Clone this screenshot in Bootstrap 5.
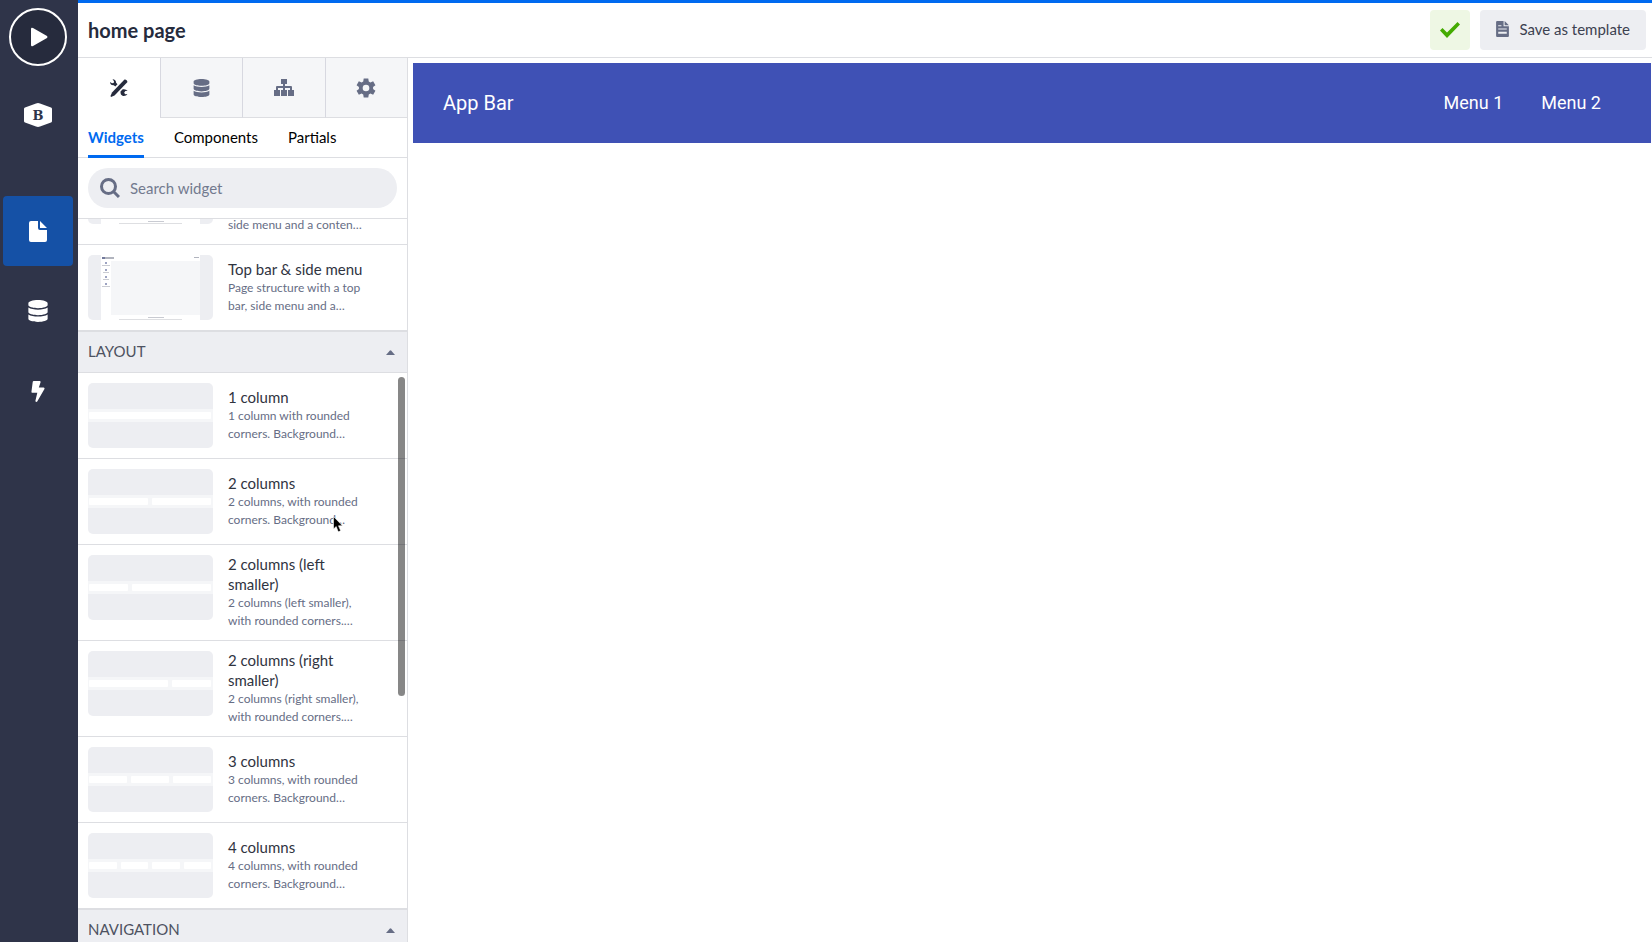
<!DOCTYPE html>
<html lang="en">
<head>
<meta charset="utf-8">
<meta name="viewport" content="width=device-width, initial-scale=1">
<title>home page</title>
<link href="https://cdn.jsdelivr.net/npm/bootstrap@5.3.0/dist/css/bootstrap.min.css" rel="stylesheet">
<style>
  :root { --ink:#262b3d; --slate:#666d85; --line:#dddee2; --soft:#edeef2; --blue:#006af0; }
  body { font-family: Lato, sans-serif; font-size:15px; line-height:20px; color:var(--ink); background:#fff; }
  svg { display:block; fill:currentColor; }
  button { font:inherit; }
  .rail { width:78px; background:#2f3449; color:#fff; padding:8px 2px 0 0; }
  .rail button, .rail a { width:70px; height:70px; border:0; background:none; color:#fff; border-radius:4px; }
  .rail .play { width:58px; height:58px; border:2px solid #fff; border-radius:50%; background:var(--ink); }
  .play svg { margin-left:2px; }
  .rail .active { background:#1551a6; }
  .rail-links { margin-top:14px; }
  .rail-group { margin-top:46px; gap:10px; }
  .topbar { height:58px; border-top:3px solid var(--blue); border-bottom:1px solid var(--line); padding:0 6px 0 10px; }
  .topbar h1 { font-size:20px; line-height:24px; font-weight:700; }
  .saved { width:40px; height:40px; margin-right:10px; background:#eef7e4; color:#44ab00; border:0; border-radius:4px; }
  .save { height:40px; padding:0 16px 2px; gap:10px; background:var(--soft); border:0; border-radius:4px; color:#3c4150; }
  .save svg { color:var(--slate); }
  .side { width:330px; border-right:1px solid var(--line); }
  .modes button { flex:1 1 0; height:60px; border:0; border-left:1px solid #d7d8e0; border-bottom:1px solid var(--line); background:#f5f6f8; color:var(--slate); }
  .modes .active { background:#fff; color:var(--ink); border-color:transparent; border-left:0; }
  .kinds { height:40px; padding:0 10px; gap:30px; border-bottom:1px solid var(--line); }
  .kinds a { color:#000; text-decoration:none; padding-top:9px; height:40px; border-bottom:3px solid transparent; }
  .kinds .active { color:var(--blue); font-weight:700; border-color:var(--blue); }
  .search-area { padding:10px; border-bottom:1px solid var(--line); }
  .search-pill { height:40px; border-radius:20px; background:var(--soft); padding:0 12px; gap:10px; color:var(--slate); }
  .search-pill input { border:0; background:none; outline:0; padding:0; color:inherit; min-width:0; }
  .search-pill input::placeholder { color:#737a8f; opacity:1; }
  .widget { padding:9px 36px 10px 10px; gap:15px; border-bottom:1px solid var(--line); min-height:86px; }
  .widget h3 { font-size:15px; line-height:20px; font-weight:400; color:#30343f; margin:0; }
  .widget p { font-size:12px; line-height:18px; color:var(--slate); margin:0; }
  .widget-cut { height:26px; min-height:0; padding-top:0; padding-bottom:12px; }
  .widget-cut .thumb { margin-bottom:8px; }
  .widget-cut p { line-height:14px; }
  .thumb { width:125px; height:65px; margin-top:1px; border-radius:5px; background:var(--soft); overflow:hidden; flex:none; }
  .band { height:13px; margin-top:26px; padding:3px 2px 3px 1px; gap:4px; background:#f5f6f8; }
  .band i { flex:1 1 0; background:#fff; border-radius:1px; }
  .band .wide { flex-grow:2; }
  .section-head { height:42px; padding:0 12px 2px 10px; border:0; border-top:1px solid var(--line); border-bottom:1px solid var(--line); background:var(--soft); color:#4d5261; text-align:left; }
  .section-head svg { color:var(--slate); margin-top:2px; }
  .scroll-thumb { right:2px; top:158px; width:7px; height:319px; border-radius:4px; background:rgba(0,0,0,.47); }
  .pointer { left:255px; top:297px; color:#000; }
  .stage { padding:5px 1px 0 5px; }
  .appbar { height:80px; background:#3f51b5; color:#fff; font-family:Roboto,sans-serif; padding:0 50px 0 30px; font-size:18px; }
  .appbar a { color:#fff; text-decoration:none; }
  .appbar .brand { font-size:20px; }
  .menus { gap:38px; }
</style>
</head>
<body>
<svg width="0" height="0" class="position-absolute" aria-hidden="true">
  <symbol id="db" viewBox="0 0 448 512"><path d="M448 73v46c0 40-100 73-224 73S0 159 0 119V73C0 33 100 0 224 0s224 33 224 73zm0 103v103c0 40-100 73-224 73S0 319 0 279V176c48 33 136 49 224 49s176-16 224-49zm0 160v103c0 40-100 73-224 73S0 479 0 439V336c48 33 136 49 224 49s176-16 224-49z"/></symbol>
  <symbol id="page-frame" viewBox="0 0 125 65">
    <path fill="#fff" d="M13 0h99v65H13z"/><path fill="#f5f6f8" d="M23 6h89v54H23z"/>
    <path fill="#737a9c" d="M14 2h3v2h-3z"/><path fill="#b1b4be" d="M17 2h9v2h-9zM106 2h5v1h-5z"/>
    <path fill="#c9cbd2" d="M14 10h8v1h-8zM15 17h6v1h-6zM15 24h6v1h-6zM14 31h8v1h-8zM60 62h16v1H60z"/>
    <path fill="#9da3c2" d="M17 7h2v2h-2zM17 14h2v2h-2zM17 21h2v2h-2zM17 28h2v2h-2z"/><path fill="#dedfe2" d="M31 64h63v1H31z"/>
  </symbol>
</svg>
<div class="d-flex vh-100 overflow-hidden">
  <nav class="rail d-flex flex-column align-items-center flex-shrink-0" aria-label="Main">
    <button class="play d-flex align-items-center justify-content-center p-0" aria-label="Play"><svg width="18" height="20" viewBox="0 0 18 20"><path d="M1 2v16q0 2 2 1l14-8q1-1 0-2L3 1Q1 0 1 2z"/></svg></button>
    <div class="rail-links">
      <a href="#" class="d-flex align-items-center justify-content-center text-decoration-none" aria-label="Brand"><svg width="28" height="24" viewBox="0 0 28 24"><path d="M14 0q1 0 2 .5l11 4q1 .4 1 1.500v12q0 1.100-1 1.500l-11 4q-2 .8-4 0l-11-4q-1-.4-1-1.500V6q0-1.100 1-1.500l11-4Q13 0 14 0z"/><text x="14" y="17" text-anchor="middle" font-family="DejaVu Serif, serif" font-weight="700" font-size="13" fill="#2f3449">B</text></svg></a>
    </div>
    <div class="rail-group d-flex flex-column">
      <a href="#" class="active d-flex align-items-center justify-content-center" aria-label="Pages"><svg width="18" height="21" viewBox="0 0 18 21"><path d="M2 0h7v7q0 2 2 2h7v10q0 2-2 2H2q-2 0-2-2V2q0-2 2-2zM11 0l7 7h-7z"/></svg></a>
      <a href="#" class="d-flex align-items-center justify-content-center" aria-label="Data"><svg width="20" height="22"><use href="#db"/></svg></a>
      <a href="#" class="d-flex align-items-center justify-content-center" aria-label="Actions"><svg width="14" height="21" viewBox="0 0 320 512"><path d="M296 160H180l43-129C227 15 216 0 200 0H56C44 0 34 9 32 21L0 261c-2 14 9 27 24 27h119L97 483c-4 15 8 29 23 29 8 0 16-4 21-12l176-304c9-16-3-36-21-36z"/></svg></a>
    </div>
  </nav>
  <div class="d-flex flex-column flex-grow-1 overflow-hidden">
    <header class="topbar d-flex align-items-center flex-shrink-0">
      <h1 class="m-0 flex-grow-1">home page</h1>
      <button class="saved d-flex align-items-center justify-content-center p-0" aria-label="Saved"><svg width="20" height="16" viewBox="0 0 20 16"><path d="M0 8.500 2.500 6 7 10.500 17.500 0 20 2.500 7 16z"/></svg></button>
      <button class="save d-flex align-items-center"><svg width="13" height="16" viewBox="0 0 12 15"><path fill-rule="evenodd" d="M1 0h6v5h5v9q0 1-1 1H1q-1 0-1-1V1q0-1 1-1zM8 0l4 4H8zM2 4v1h3V4zM2 7v1h8V7zM2 10v2h8v-2z"/></svg>Save as template</button>
    </header>
    <div class="d-flex flex-grow-1 overflow-hidden">
      <aside class="side d-flex flex-column flex-shrink-0 overflow-hidden">
        <div class="modes d-flex flex-shrink-0">
          <button class="active d-flex align-items-center justify-content-center" aria-label="Build"><svg width="18" height="18" viewBox="0 0 18 18"><path d="M14.500.5q2.500-.5 3 2.500L4.500 16.500 1 18l-.500-1 1.500-3.500z"/><path d="M2.500.2q3.500 0 3.600 3.600L7.500 5.300 5.300 7.500 3.800 6.200Q.4 6.500 0 3l2 1.300 1.700-.3.300-1.700zM10.500 12.500l2.200-2.200q3-.5 5 1.500l-2.300.2-1.200 1.500.8 1.700 2.500-.2q-1.500 2.500-4.500 2-2.800-1-2.500-4.500z"/></svg></button>
          <button class="d-flex align-items-center justify-content-center" aria-label="Data"><svg width="17" height="18"><use href="#db"/></svg></button>
          <button class="d-flex align-items-center justify-content-center" aria-label="Structure"><svg width="20" height="17" viewBox="0 0 20 17"><path d="M7 0h6v5h-2v2h6q1 0 1 1v3h2v6h-6v-6h2V9h-5v2h2v6H7v-6h2V9H4v2h2v6H0v-6h2V8q0-1 1-1h6V5H7z"/></svg></button>
          <button class="d-flex align-items-center justify-content-center" aria-label="Settings"><svg width="20" height="20" viewBox="1.500 1.500 21 21"><path d="M19.400 13a7.500 7.500 0 0 0 0-2l2.500-1.900-2.400-4.200-2.900 1.200a7 7 0 0 0-1.700-1L14.400 2H9.600l-.5 3.100a7 7 0 0 0-1.700 1L4.500 4.900 2.100 9.100 4.600 11a7.500 7.500 0 0 0 0 2l-2.500 1.900 2.400 4.200 2.900-1.200a7 7 0 0 0 1.700 1l.5 3.100h4.800l.5-3.100a7 7 0 0 0 1.700-1l2.900 1.200 2.400-4.200zM12 15.500a3.500 3.500 0 1 1 0-7 3.500 3.500 0 0 1 0 7z"/></svg></button>
        </div>
        <nav class="kinds d-flex flex-shrink-0" aria-label="Library"><a href="#" class="active">Widgets</a><a href="#">Components</a><a href="#">Partials</a></nav>
        <div class="search-area flex-shrink-0">
          <label class="search-pill d-flex align-items-center"><svg width="20" height="20" viewBox="0 0 20 20" aria-hidden="true"><path fill="none" stroke="currentColor" stroke-width="3" d="M15.500 8.500a7 7 0 1 1-14 0 7 7 0 0 1 14 0zM13.500 13.500l5.500 5.500"/></svg><input class="flex-grow-1" type="text" placeholder="Search widget" aria-label="Search widget"></label>
        </div>
        <div class="position-relative flex-grow-1 overflow-hidden">
          <div class="widget widget-cut d-flex align-items-end"><div class="thumb"><svg width="125" height="65"><use href="#page-frame"/></svg></div><p>side menu and a conten…</p></div>
          <div class="widget d-flex"><div class="thumb"><svg width="125" height="65"><use href="#page-frame"/></svg></div><div class="align-self-center"><h3>Top bar &amp; side menu</h3><p>Page structure with a top bar, side menu and a…</p></div></div>
          <button class="section-head d-flex align-items-center justify-content-between w-100"><span>LAYOUT</span><svg width="9" height="5" viewBox="0 0 11 6"><path d="M0 6 4.500.8q1-1 2 0L11 6z"/></svg></button>
          <div class="widget d-flex"><div class="thumb"><div class="band d-flex"><i></i></div></div><div class="align-self-center"><h3>1 column</h3><p>1 column with rounded corners. Background…</p></div></div>
          <div class="widget d-flex"><div class="thumb"><div class="band d-flex"><i></i><i></i></div></div><div class="align-self-center"><h3>2 columns</h3><p>2 columns, with rounded corners. Background…</p></div></div>
          <div class="widget d-flex"><div class="thumb"><div class="band d-flex"><i></i><i class="wide"></i></div></div><div class="align-self-center"><h3>2 columns (left smaller)</h3><p>2 columns (left smaller), with rounded corners.…</p></div></div>
          <div class="widget d-flex"><div class="thumb"><div class="band d-flex"><i class="wide"></i><i></i></div></div><div class="align-self-center"><h3>2 columns (right smaller)</h3><p>2 columns (right smaller), with rounded corners.…</p></div></div>
          <div class="widget d-flex"><div class="thumb"><div class="band d-flex"><i></i><i></i><i></i></div></div><div class="align-self-center"><h3>3 columns</h3><p>3 columns, with rounded corners. Background…</p></div></div>
          <div class="widget d-flex"><div class="thumb"><div class="band d-flex"><i></i><i></i><i></i><i></i></div></div><div class="align-self-center"><h3>4 columns</h3><p>4 columns, with rounded corners. Background…</p></div></div>
          <button class="section-head d-flex align-items-center justify-content-between w-100"><span>NAVIGATION</span><svg width="9" height="5" viewBox="0 0 11 6"><path d="M0 6 4.500.8q1-1 2 0L11 6z"/></svg></button>
          <div class="scroll-thumb position-absolute"></div>
          <svg class="pointer position-absolute" width="11" height="17" viewBox="0 0 11 17" aria-hidden="true"><path stroke="#fff" stroke-width=".6" d="M.5.500v12.500l2.700-2.500 2 5.300 2.500-1-2.200-5h4z"/></svg>
        </div>
      </aside>
      <main class="stage flex-grow-1">
        <div class="appbar d-flex align-items-center justify-content-between">
          <span class="brand">App Bar</span>
          <nav class="menus d-flex" aria-label="App menu"><a href="#">Menu 1</a><a href="#">Menu 2</a></nav>
        </div>
      </main>
    </div>
  </div>
</div>
<script src="https://cdn.jsdelivr.net/npm/bootstrap@5.3.0/dist/js/bootstrap.bundle.min.js"></script>
</body>
</html>
